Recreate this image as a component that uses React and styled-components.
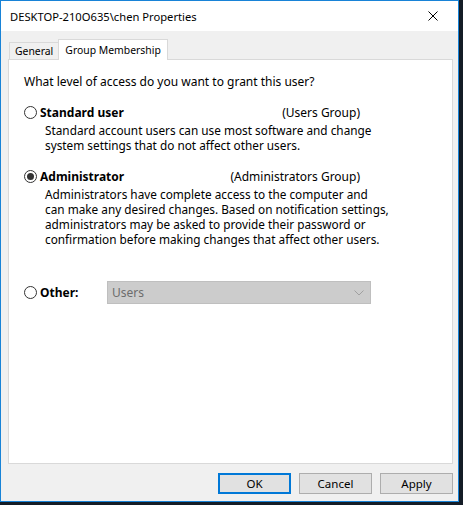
import React, { useState } from 'react'
import styled, { createGlobalStyle } from 'styled-components'

const Global = createGlobalStyle`
  html, body {
    margin: 0;
    padding: 0;
    background: #141c26;
  }
  body {
    font-family: "Segoe UI", "Noto Sans", sans-serif;
    font-size: 12px;
    color: #000;
  }
`

const Window = styled.div`
  width: 457px;
  height: 500px;
  border: 1px solid #1883d7;
  background: #f0f0f0;
  display: flex;
  flex-direction: column;
`

const TitleBar = styled.div`
  height: 30px;
  background: #fff;
  display: flex;
  align-items: center;
  justify-content: space-between;
  padding: 0 0 0 9px;
`

const Title = styled.div`
  font-size: 11.2px;
  line-height: 16px;
  margin-top: 1px;
`

const CloseButton = styled.div`
  width: 46px;
  height: 30px;
  display: flex;
  align-items: center;
  justify-content: center;
  margin-right: 2px;
`

const Body = styled.div`
  flex: 1;
  display: flex;
  flex-direction: column;
  padding: 8px 5px 0 7px;
`

const TabStrip = styled.div`
  display: flex;
  align-items: flex-end;
  height: 21px;
  padding-left: 1px;
  margin-bottom: -1px;
  position: relative;
  z-index: 1;
`

const Tab = styled.div`
  height: ${p => (p.$active ? '21px' : '18px')};
  padding: 0 ${p => (p.$active ? '6px' : '5px')};
  margin-left: ${p => (p.$active ? '-1px' : '0')};
  display: flex;
  align-items: center;
  font-size: 10.4px;
  background: ${p => (p.$active ? '#fff' : '#f0f0f0')};
  border: 1px solid #d9d9d9;
  border-bottom: ${p => (p.$active ? 'none' : '1px solid #d9d9d9')};
  box-sizing: border-box;
  cursor: default;
`

const Panel = styled.div`
  height: 405px;
  box-sizing: border-box;
  border: 1px solid #d9d9d9;
  background: #fff;
  padding: 14px 0 0 15px;
`

const Question = styled.div`
  line-height: 16px;
  margin-bottom: 14px;
`

const Option = styled.div`
  margin-bottom: ${p => p.$gap || 0}px;
`

const OptionHeader = styled.div`
  width: 336px;
  height: 16px;
  display: flex;
  align-items: center;
  justify-content: space-between;
`

const RadioLabel = styled.label`
  display: flex;
  align-items: center;
  gap: 3px;
  font-weight: bold;
  cursor: default;
`

const RadioCircle = styled.span`
  width: 13px;
  height: 13px;
  box-sizing: border-box;
  border: 1px solid #333;
  border-radius: 50%;
  background: #fff;
  display: flex;
  align-items: center;
  justify-content: center;
  &::after {
    content: '';
    width: 7px;
    height: 7px;
    border-radius: 50%;
    background: ${p => (p.$checked ? '#333' : 'transparent')};
  }
`

const GroupName = styled.span`
  color: #000;
`

const Description = styled.div`
  padding-left: 21px;
  margin-top: 3px;
`

const DescLine = styled.div`
  height: 15px;
  line-height: 15px;
  font-size: 11.8px;
  white-space: nowrap;
`

const OtherRow = styled.div`
  display: flex;
  align-items: center;
`

const OtherLabel = styled(RadioLabel)`
  width: 83px;
`

const Select = styled.div`
  width: 264px;
  height: 23px;
  box-sizing: border-box;
  background: #cccccc;
  border: 1px solid #bfbfbf;
  color: #6d6d6d;
  display: flex;
  align-items: center;
  justify-content: space-between;
  padding: 0 6px 0 4px;
`

const ButtonRow = styled.div`
  display: flex;
  justify-content: flex-end;
  gap: 8px;
  padding-top: 9px;
`

const Button = styled.button`
  width: 73px;
  height: 21px;
  box-sizing: border-box;
  font-family: inherit;
  font-size: 11.5px;
  color: #000;
  background: #e1e1e1;
  border: ${p => (p.$default ? '2px solid #0078d7' : '1px solid #adadad')};
  padding: 0;
`

function Radio({ checked, label, onSelect }) {
  return (
    <RadioLabel onClick={onSelect}>
      <RadioCircle $checked={checked} />
      {label}
    </RadioLabel>
  )
}

const options = [
  {
    id: 'standard',
    label: 'Standard user',
    group: '(Users Group)',
    lines: [
      'Standard account users can use most software and change',
      'system settings that do not affect other users.',
    ],
    gap: 15,
  },
  {
    id: 'admin',
    label: 'Administrator',
    group: '(Administrators Group)',
    lines: [
      'Administrators have complete access to the computer and',
      'can make any desired changes. Based on notification settings,',
      'administrators may be asked to provide their password or',
      'confirmation before making changes that affect other users.',
    ],
    gap: 34,
  },
]

export default function App() {
  const [level, setLevel] = useState('admin')

  return (
    <>
      <Global />
      <Window>
        <TitleBar>
          <Title>DESKTOP-210O635\chen Properties</Title>
          <CloseButton>
            <svg width="10" height="10" viewBox="0 0 10 10">
              <path d="M0.5 0.5 L9.5 9.5 M9.5 0.5 L0.5 9.5" stroke="#000" strokeWidth="1" />
            </svg>
          </CloseButton>
        </TitleBar>
        <Body>
          <TabStrip>
            <Tab>General</Tab>
            <Tab $active>Group Membership</Tab>
          </TabStrip>
          <Panel>
            <Question>What level of access do you want to grant this user?</Question>
            {options.map(o => (
              <Option key={o.id} $gap={o.gap}>
                <OptionHeader>
                  <Radio checked={level === o.id} label={o.label} onSelect={() => setLevel(o.id)} />
                  <GroupName>{o.group}</GroupName>
                </OptionHeader>
                <Description>
                  {o.lines.map(l => (
                    <DescLine key={l}>{l}</DescLine>
                  ))}
                </Description>
              </Option>
            ))}
            <OtherRow>
              <OtherLabel onClick={() => setLevel('other')}>
                <RadioCircle $checked={level === 'other'} />
                Other:
              </OtherLabel>
              <Select>
                <span>Users</span>
                <svg width="10" height="6" viewBox="0 0 10 6">
                  <path d="M0.5 0.5 L5 5 L9.5 0.5" stroke="#a0a0a0" fill="none" strokeWidth="1" />
                </svg>
              </Select>
            </OtherRow>
          </Panel>
          <ButtonRow>
            <Button $default>OK</Button>
            <Button>Cancel</Button>
            <Button>Apply</Button>
          </ButtonRow>
        </Body>
      </Window>
    </>
  )
}
